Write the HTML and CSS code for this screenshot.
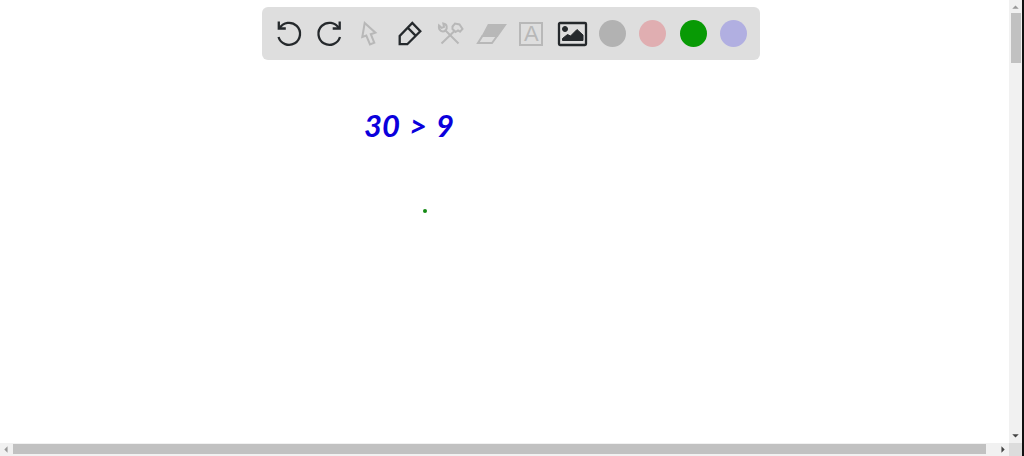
FILE: index.html
```html
<!DOCTYPE html>
<html lang="en">
<head>
	<meta charset="utf-8">
	<title>Whiteboard</title>
	<link rel="stylesheet" href="styles.css">
</head>
<body>
	<div class="page">
		<main class="board">
			<div class="ink"><span>30</span><span>&gt;</span><span>9</span></div>
			<div class="dot"></div>
		</main>

		<div class="toolbar" role="toolbar" aria-label="Drawing tools">
			<button type="button" class="tool" aria-label="Undo">
				<svg viewBox="0 0 28 28"><path d="M3.5 17A11 11 0 1 0 4.5 8.3"/><path d="M3.8 1.5v7h7"/></svg>
			</button>
			<button type="button" class="tool" aria-label="Redo">
				<svg viewBox="0 0 28 28"><path d="M25 17A11 11 0 1 1 24 8.3"/><path d="M24.7 1.5v7h-7"/></svg>
			</button>
			<button type="button" class="tool off" aria-label="Select">
				<svg viewBox="0 0 28 28"><path d="M9.7 3L7.3 17l4-1.5 3.7 9 4.3-1.7-3.5-8.6 4.6-1.5z"/></svg>
			</button>
			<button type="button" class="tool" aria-label="Pen">
				<svg viewBox="0 0 28 28"><path d="M3.7 24.2V16L16.3 3l8 8.3-13 12.9zM11.8 7.7l8 8.2"/></svg>
			</button>
			<button type="button" class="tool off" aria-label="Tools">
				<svg viewBox="0 0 28 28"><path d="M3 5.5l2.6 2.3 2.4-1L7.3 3.5C11 4 11.8 8 9.5 10.3 7 12.8 2 11 3 5.5z"/><path d="M9.5 10.5L22.5 23.5"/><path d="M16.5 6.5l2.5-3 4.5 1 3 4.5-2.5 2.7-2-1.2-2.5 1.5-3-3z"/><path d="M19 10.5L5.5 23.5"/></svg>
			</button>
			<button type="button" class="tool off" aria-label="Eraser">
				<svg viewBox="0 0 28 28"><path class="solid" d="M11.5 5H28l-7.8 11H5.7z"/><path d="M5.7 15.5L1 23h14l5.5-7.5"/></svg>
			</button>
			<button type="button" class="tool off" aria-label="Text"><span class="letter">A</span></button>
			<button type="button" class="tool" aria-label="Picture">
				<svg viewBox="0 0 28 28"><rect x="1" y="3" width="27" height="22" rx="1"/><circle class="solid thin" cx="7" cy="9" r="2.5"/><path class="solid thin" d="M4.5 20.500v-2l5-4 3 1.500 6.500-6.500 6 5.500v5.500z"/></svg>
			</button>
			<button type="button" class="tool swatch gray" aria-label="Gray"></button>
			<button type="button" class="tool swatch pink" aria-label="Pink"></button>
			<button type="button" class="tool swatch green" aria-label="Green"></button>
			<button type="button" class="tool swatch lilac" aria-label="Lilac"></button>
		</div>

		<div class="bar vertical">
			<button type="button" class="arrow faint" aria-label="Scroll up"><svg viewBox="0 0 12 12"><path d="M6 5l3 3H3z"/></svg></button>
			<div class="track"><div class="thumb"></div></div>
			<button type="button" class="arrow" aria-label="Scroll down"><svg viewBox="0 0 12 12"><path d="M3 4h6L6 7z"/></svg></button>
		</div>
		<div class="bar horizontal">
			<button type="button" class="arrow faint" aria-label="Scroll left"><svg viewBox="0 0 12 12"><path d="M4 6l3-3v6z"/></svg></button>
			<div class="track"><div class="thumb"></div></div>
			<button type="button" class="arrow" aria-label="Scroll right"><svg viewBox="0 0 12 12"><path d="M5 3l3 3-3 3z"/></svg></button>
		</div>
		<div class="corner"></div>
	</div>
</body>
</html>
```

FILE: styles.css
```css
* {
	box-sizing: border-box;
}

body {
	margin: 0;
	background: #fff;
	font-family: Lato, sans-serif;
}

.page {
	display: grid;
	grid-template-columns: 1fr 13px;
	grid-template-rows: 1fr 13px;
	height: 100vh;
	border-right: 2px solid #111;
}

/* Drawing area */

.board {
	grid-area: 1 / 1;
	position: relative;
	overflow: hidden;
}

.ink {
	position: absolute;
	left: 364px;
	top: 107px;
	display: flex;
	gap: 9px;
	color: #0b00dc;
	font-size: 31px;
	line-height: 36px;
	font-weight: bold;
	font-style: italic;
}

.dot {
	position: absolute;
	left: 423px;
	top: 209px;
	width: 4px;
	height: 4px;
	border-radius: 50%;
	background: #148a14;
}

/* Toolbar */

.toolbar {
	grid-area: 1 / 1 / 2 / 3;
	justify-self: center;
	align-self: start;
	z-index: 1;
	display: flex;
	justify-content: space-between;
	align-items: center;
	width: 498px;
	max-width: 100%;
	margin-top: 7px;
	padding: 13px;
	border-radius: 6px;
	background: #dedede;
}

.tool {
	display: flex;
	justify-content: center;
	align-items: center;
	width: 27px;
	height: 27px;
	padding: 0;
	border: 0;
	background: none;
	color: #25292c;
	cursor: pointer;
}

.tool svg {
	flex: none;
	width: 28px;
	height: 28px;
	overflow: visible;
	fill: none;
	stroke: currentColor;
	stroke-width: 2.3;
}

.off {
	color: #b8b8b8;
}

.off svg {
	stroke-width: 2;
}

.tool .solid {
	fill: currentColor;
}

.tool .thin {
	stroke-width: 1;
}

.letter {
	width: 24px;
	height: 24px;
	border: 2px solid currentColor;
	font-family: "Liberation Sans", sans-serif;
	font-size: 22px;
	line-height: 20px;
	text-align: center;
}

.swatch {
	border-radius: 50%;
}

.gray {
	background: #b2b2b2;
}

.pink {
	background: #e0aeb1;
}

.green {
	background: #089a05;
}

.lilac {
	background: #b1afe1;
}

/* Scroll bars */

.bar {
	display: flex;
	background: #f1f1f1;
}

.vertical {
	grid-area: 1 / 2;
	flex-direction: column;
}

.horizontal {
	grid-area: 2 / 1;
}

.corner {
	grid-area: 2 / 2;
	background: #dcdcdc;
}

.arrow {
	display: flex;
	flex: none;
	width: 13px;
	height: 13px;
	padding: 0;
	border: 0;
	background: none;
	color: #444;
}

.faint {
	color: #999;
}

.arrow svg {
	width: 13px;
	height: 13px;
	fill: currentColor;
}

.track {
	flex: 1;
}

.thumb {
	background: #c1c1c1;
}

.vertical .thumb {
	height: 12%;
	margin: 0 1px 0 2px;
}

.horizontal .thumb {
	width: 99%;
	height: 10px;
	margin-top: 1px;
}
```
